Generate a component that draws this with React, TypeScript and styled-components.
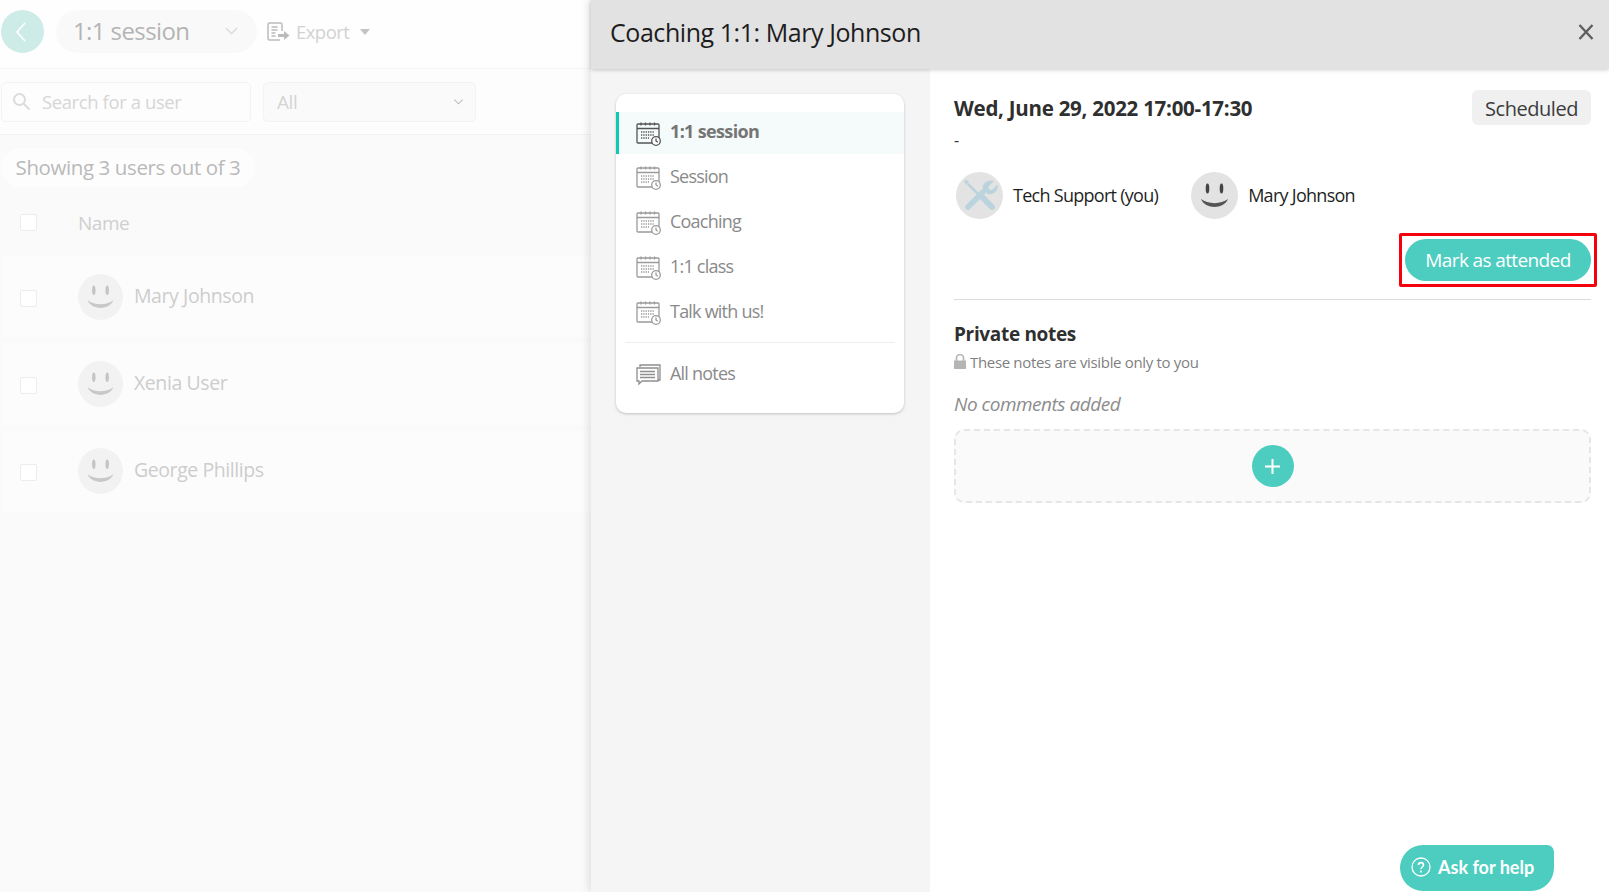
import React from "react";
import styled, { createGlobalStyle } from "styled-components";

const Global = createGlobalStyle`
  html, body { margin: 0; padding: 0; background: #fff; }
  * { box-sizing: border-box; }
  body { font-family: "Open Sans", "Noto Sans", sans-serif; }
`;
const Page = styled.div`display:flex;width:1609px;height:892px;overflow:hidden;`;
const Left = styled.div`width:591px;flex:none;background:#fafafa;display:flex;flex-direction:column;`;
const TopBar = styled.div`height:69px;background:#fefefe;border-bottom:1px solid #f5f5f5;display:flex;align-items:center;padding:0 0 5px 1px;`;
const BackBtn = styled.div`width:43px;height:43px;border-radius:50%;background:#cdecE8;display:flex;align-items:center;justify-content:center;margin-right:12px;`;
const BackGlyph = styled.svg`margin-right:4px;`;
const SessionPill = styled.div`width:201px;height:43px;border-radius:22px;background:#f9f9f9;display:flex;align-items:center;justify-content:space-between;padding:0 18px 3px 17px;font-size:24px;letter-spacing:-.6px;color:#b4b4b4;margin-right:10px;`;
const ExportBtn = styled.div`display:flex;align-items:center;gap:6px;font-size:18.500px;letter-spacing:-.55px;color:#d2d2d2;`;
const Caret = styled.span`width:0;height:0;border-left:5px solid transparent;border-right:5px solid transparent;border-top:6px solid #c4c4c4;margin-left:5px;`;
const FilterBar = styled.div`height:66px;background:#fdfdfd;border-bottom:1px solid #f2f2f2;display:flex;align-items:center;gap:12px;padding:0 0 0 1px;`;
const SearchBox = styled.div`width:250px;height:40px;border:1px solid #f3f3f3;border-radius:5px;display:flex;align-items:center;gap:11px;padding:0 10px;font-size:18.500px;letter-spacing:-.4px;color:#d6d6d6;`;
const FilterSelect = styled.div`width:213px;height:40px;border:1px solid #f3f3f3;border-radius:5px;background:#fafafa;display:flex;align-items:center;justify-content:space-between;padding:0 11px 0 13px;font-size:19px;letter-spacing:-.4px;color:#d4d4d4;`;
const CountPill = styled.div`align-self:flex-start;margin:13px 0 0 1px;height:39px;width:254px;border-radius:20px;background:#fdfdfd;display:flex;align-items:center;justify-content:center;padding-bottom:1px;font-size:20.500px;letter-spacing:-.4px;color:#b9b9b9;white-space:nowrap;`;
const HeadRow = styled.div`height:69px;display:flex;align-items:center;padding:2px 0 0 20px;font-size:19px;letter-spacing:-.45px;color:#cfcfcf;`;
const Check = styled.span<{ $low?: boolean }>`width:17px;height:17px;border:1px solid #ececec;border-radius:2px;background:#fff;flex:none;margin-right:41px;margin-top:${p => (p.$low ? 3 : 0)}px;`;
const UserRows = styled.div`display:flex;flex-direction:column;gap:5px;padding-left:1px;`;
const UserRow = styled.div`height:82px;background:#fcfcfc;display:flex;align-items:center;padding-left:19px;font-size:19.500px;letter-spacing:-.42px;color:#cdcdcd;`;
const UserName = styled.span`margin-bottom:3px;`;
const FaintAvatar = styled.span`width:45px;height:46px;border-radius:50%;background:#f2f2f2;flex:none;margin-right:11px;display:flex;`;
const Drawer = styled.div`flex:1;display:flex;flex-direction:column;position:relative;box-shadow:-3px 0 8px rgba(0,0,0,.1);background:#fff;`;
const DrawerHead = styled.div`height:69px;flex:none;background:#e2e2e2;box-shadow:0 1px 4px rgba(0,0,0,.2);display:flex;align-items:center;justify-content:space-between;padding:0 15px 5px 19px;font-size:25px;letter-spacing:-.44px;color:#1d1d1d;position:relative;`;
const DrawerBody = styled.div`flex:1;display:flex;min-height:0;`;
const SideCol = styled.div`width:339px;flex:none;background:#f5f5f5;padding:25px 25px 0;`;
const SideCard = styled.div`height:319px;width:288px;background:#fff;border-radius:10px;box-shadow:0 1px 3px rgba(0,0,0,.22);padding-top:18px;`;
const SideItem = styled.div<{ $active?: boolean }>`height:${p => (p.$active ? 42 : 45)}px;display:flex;align-items:center;gap:9px;padding-left:${p => (p.$active ? 17 : 20)}px;font-size:18px;letter-spacing:${p => (p.$active ? -.65 : -.78)}px;color:${p => (p.$active ? "#757575" : "#8a8a8a")};font-weight:${p => (p.$active ? 700 : 400)};background:${p => (p.$active ? "#f5fbfb" : "transparent")};border-left:${p => (p.$active ? "3px solid #10c9b4" : "0")};&:nth-child(2){margin-top:1px;}`;
const SideLabel = styled.span`margin-bottom:4px;`;
const SideRule = styled.div`height:1px;background:#eeeeee;margin:7px 9px 9px;`;
const Main = styled.div`flex:1;padding:21px 18px 0 24px;display:flex;flex-direction:column;`;
const DateRow = styled.div`display:flex;justify-content:space-between;align-items:center;height:35px;font-weight:700;font-size:20.500px;letter-spacing:-.26px;color:#2f2f2f;`;
const Status = styled.span`width:119px;height:35px;border-radius:6px;background:#f0f0f0;display:flex;align-items:center;justify-content:center;padding-top:2px;font-weight:400;font-size:20px;letter-spacing:-.45px;color:#3c3c3c;`;
const Dash = styled.div`font-size:16px;height:20px;line-height:20px;margin-top:5px;color:#333;`;
const People = styled.div`display:flex;align-items:center;gap:33px;margin-top:21px;padding-left:2px;height:48px;`;
const Person = styled.div`display:flex;align-items:center;gap:10px;font-size:18px;letter-spacing:-.72px;color:#1f1f1f;`;
const PersonName = styled.span`margin-bottom:1px;`;
const Avatar = styled.span`width:47px;height:47px;border-radius:50%;background:#e3e3e3;display:flex;flex:none;`;
const ActionRow = styled.div`display:flex;justify-content:flex-end;margin-top:20px;`;
const Marked = styled.div`position:relative;`;
const Highlight = styled.span`position:absolute;inset:-6px;border:3px solid #f5000d;border-radius:2px;`;
const Attend = styled.div`width:186px;height:42px;border-radius:21px;background:#4dcdbf;display:flex;align-items:center;justify-content:center;font-size:19px;letter-spacing:-.62px;color:#fff;`;
const Rule = styled.div`height:1px;background:#dcdcdc;margin-top:18px;`;
const NotesTitle = styled.div`font-weight:700;font-size:19px;letter-spacing:-.33px;color:#2f2f2f;margin-top:21px;line-height:26px;`;
const NotesHint = styled.div`display:flex;align-items:center;gap:4px;font-size:15px;letter-spacing:-.33px;color:#7f7f7f;line-height:20px;margin-top:5px;`;
const Empty = styled.div`font-style:italic;font-size:19px;letter-spacing:-.48px;color:#8c8c8c;line-height:24px;margin-top:20px;`;
const AddBox = styled.div`height:74px;margin-top:13px;border:2px dashed #e6e6e6;border-radius:10px;background:#fafafa;display:flex;align-items:center;justify-content:center;`;
const AddBtn = styled.span`width:42px;height:42px;border-radius:50%;background:#4dcdbf;display:flex;align-items:center;justify-content:center;`;
const Help = styled.div`position:absolute;left:809px;top:845px;width:154px;height:46px;border-radius:23px 7px 23px 23px;background:#4dcdbf;display:flex;align-items:center;gap:7px;padding:0 0 2px 11px;font-family:Lato,sans-serif;font-weight:700;font-size:18px;color:#fff;`;

const Cal = ({ c, w = 1.3 }: { c: string; w?: number }) => (
  <svg width="25" height="25" viewBox="0 0 25 25" fill="none" stroke={c} strokeWidth={w}>
    <rect x="1" y="3" width="22" height="19" rx="1" />
    <path d="M1 7.500h22M5 1.500v3M9.500 1.500v3M14 1.500v3M18.500 1.500v3" />
    <path d="M5 11h13M5 14h13M5 17h8" strokeDasharray="1.300 1" />
    <circle cx="20" cy="20" r="4.300" fill="#fff" />
    <path d="M20 17.500V20l1.800 1.300" />
  </svg>
);
const NotesIcon = () => (
  <svg width="25" height="22" viewBox="0 0 25 22" fill="none" stroke="#8e8e8e" strokeWidth="1.300">
    <path d="M4 3V1h20v15h-2" />
    <path d="M1 4h21v13H6l-3 3v-3H1z" fill="#fff" />
    <path d="M4 7.500h15M4 10.500h15M4 13.500h15" />
  </svg>
);
const Smile = ({ eye, mouth }: { eye: string; mouth: string }) => (
  <svg width="100%" height="100%" viewBox="0 0 47 47" fill="none">
    <ellipse cx="16.500" cy="16.500" rx="1.800" ry="5" fill={eye} />
    <ellipse cx="30.500" cy="16.500" rx="1.800" ry="5" fill={eye} />
    <path d="M10 27c7 5.500 20 5.500 27 0-4 10.500-23 10.500-27 0z" fill={mouth} />
  </svg>
);
const Tools = () => (
  <svg width="47" height="47" viewBox="0 0 47 47" fill="none">
    <path d="M12 12l14 14" stroke="#bad3dd" strokeWidth="2.600" />
    <path d="M10 13l3-3-3-2.500-2 2z" fill="#bad3dd" />
    <path d="M25 24l11 11" stroke="#bad3dd" strokeWidth="6" strokeLinecap="round" />
    <path d="M27 20L12 35" stroke="#bad3dd" strokeWidth="5.500" strokeLinecap="round" />
    <path d="M38 9l-5.500 5.500.5 3 3 .5 5.500-5.500c1.500 5.500-4 11-9.500 9.500l-5-5c-1.500-5.500 5-10 11-8z" fill="#bad3dd" />
  </svg>
);
const Chevron = ({ s, c }: { s: number; c: string }) => (
  <svg width={s} height={s} viewBox="0 0 12 12" fill="none" stroke={c} strokeWidth="1.200"><path d="M1.500 4l4.500 4.500L10.500 4" /></svg>
);

const sideItems = ["Session", "Coaching", "1:1 class", "Talk with us!"];
const users = ["Mary Johnson", "Xenia User", "George Phillips"];

export default function App() {
  return (
    <Page>
      <Global />
      <Left>
        <TopBar>
          <BackBtn>
            <BackGlyph width="14" height="24" viewBox="0 0 14 24" fill="none" stroke="#fff" strokeWidth="1.600"><path d="M11 3L3 12l8 9" /></BackGlyph>
          </BackBtn>
          <SessionPill>1:1 session <Chevron s={15} c="#dcdcdc" /></SessionPill>
          <ExportBtn>
            <svg width="23" height="20" viewBox="0 0 23 20" fill="none" stroke="#bcbcbc" strokeWidth="1.500">
              <path d="M15 9V2.500A1.500 1.500 0 0 0 13.500 1h-11A1.500 1.500 0 0 0 1 2.500v14A1.500 1.500 0 0 0 2.500 18H13" />
              <path d="M4.500 5h6M4.500 8h6M4.500 11h4M4.500 14h4" />
              <path d="M11 12h6V9l5.500 4.500L17 18v-3h-6z" fill="#bcbcbc" stroke="none" />
            </svg>
            Export <Caret />
          </ExportBtn>
        </TopBar>
        <FilterBar>
          <SearchBox>
            <svg width="19" height="19" viewBox="0 0 19 19" fill="none" stroke="#dcdcdc" strokeWidth="2"><circle cx="7.500" cy="7.500" r="5.500" /><path d="M11.500 11.500l6 6" /></svg>
            Search for a user
          </SearchBox>
          <FilterSelect>All <Chevron s={11} c="#bdbdbd" /></FilterSelect>
        </FilterBar>
        <CountPill>Showing 3 users out of 3</CountPill>
        <HeadRow><Check />Name</HeadRow>
        <UserRows>
          {users.map(u => (
            <UserRow key={u}>
              <Check $low />
              <FaintAvatar><Smile eye="#c4c4c4" mouth="#c8c8c8" /></FaintAvatar>
              <UserName>{u}</UserName>
            </UserRow>
          ))}
        </UserRows>
      </Left>
      <Drawer>
        <DrawerHead>
          Coaching 1:1: Mary Johnson
          <svg width="16" height="18" viewBox="0 0 16 18" fill="none" stroke="#5f5f5f" strokeWidth="2.400"><path d="M1.500 2l13 14M14.500 2l-13 14" /></svg>
        </DrawerHead>
        <DrawerBody>
          <SideCol>
            <SideCard>
              <SideItem $active><Cal c="#555" /><SideLabel>1:1 session</SideLabel></SideItem>
              {sideItems.map(s => (
                <SideItem key={s}><Cal c="#9b9b9b" /><SideLabel>{s}</SideLabel></SideItem>
              ))}
              <SideRule />
              <SideItem><NotesIcon /><SideLabel>All notes</SideLabel></SideItem>
            </SideCard>
          </SideCol>
          <Main>
            <DateRow>Wed, June 29, 2022 17:00-17:30<Status>Scheduled</Status></DateRow>
            <Dash>-</Dash>
            <People>
              <Person><Avatar><Tools /></Avatar><PersonName>Tech Support (you)</PersonName></Person>
              <Person><Avatar><Smile eye="#444" mouth="#555" /></Avatar><PersonName>Mary Johnson</PersonName></Person>
            </People>
            <ActionRow>
              <Marked>
                <Highlight />
                <Attend>Mark as attended</Attend>
              </Marked>
            </ActionRow>
            <Rule />
            <NotesTitle>Private notes</NotesTitle>
            <NotesHint>
              <svg width="12" height="16" viewBox="0 0 12 16" fill="#b4b4b4"><path d="M0 6.500h12V15H0z" /><path d="M2.500 7V4a3.500 3.500 0 0 1 7 0v3" fill="none" stroke="#b4b4b4" strokeWidth="1.700" /></svg>
              These notes are visible only to you
            </NotesHint>
            <Empty>No comments added</Empty>
            <AddBox>
              <AddBtn>
                <svg width="15" height="15" viewBox="0 0 15 15" fill="none" stroke="#fff" strokeWidth="2"><path d="M7.500 0v15M0 7.500h15" /></svg>
              </AddBtn>
            </AddBox>
          </Main>
        </DrawerBody>
        <Help>
          <svg width="20" height="20" viewBox="0 0 20 20" fill="none" stroke="#fff" strokeWidth="1.300">
            <circle cx="10" cy="10" r="9" />
            <path d="M7.500 8c0-3.200 5-3.200 5 0 0 2-2.500 2-2.500 4" strokeWidth="1.600" />
            <path d="M10 13.500V15.500" strokeWidth="1.600" />
          </svg>
          Ask for help
        </Help>
      </Drawer>
    </Page>
  );
}
